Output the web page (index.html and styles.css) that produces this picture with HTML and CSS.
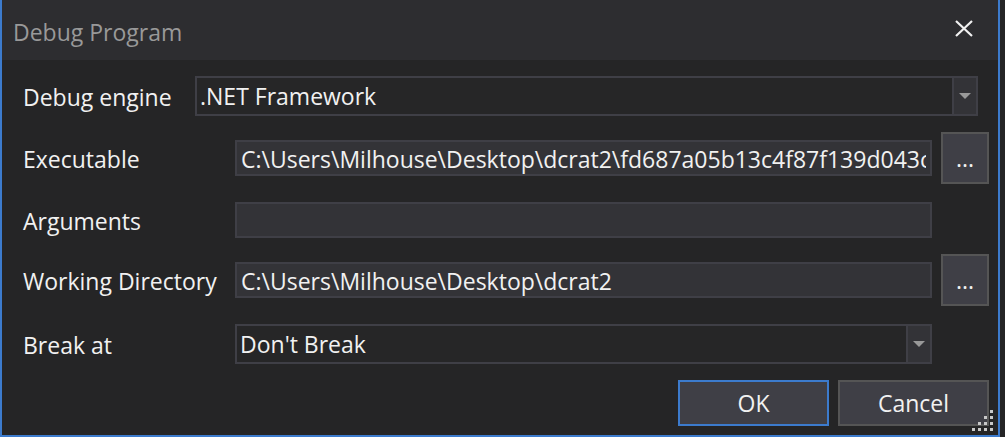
FILE: index.html
```html
<!DOCTYPE html>
<html lang="en">
<head>
    <meta charset="UTF-8">
    <title>Debug Program</title>
    <link rel="stylesheet" href="styles.css">
</head>
<body>
    <div class="dialog">
        <div class="titlebar">
            <span class="title">Debug Program</span>
            <span class="close">
                <svg width="20" height="17" viewBox="0 0 20 17">
                    <path d="M2 1 L18 16 M18 1 L2 16" stroke="#f1f1f1" stroke-width="2.2" fill="none"/>
                </svg>
            </span>
        </div>
        <div class="content">
            <div class="row row-engine">
                <label class="label label-short">Debug engine</label>
                <div class="combo combo-wide">
                    <span class="combo-value">.NET Framework</span>
                    <span class="combo-arrow"><i class="triangle"></i></span>
                </div>
            </div>
            <div class="row row-tall">
                <label class="label">Executable</label>
                <div class="textbox"><span class="textbox-text">C:\Users\Milhouse\Desktop\dcrat2\fd687a05b13c4f87f139d043c4</span></div>
                <button class="browse">...</button>
            </div>
            <div class="row row-args">
                <label class="label">Arguments</label>
                <div class="textbox"></div>
            </div>
            <div class="row row-tall">
                <label class="label">Working Directory</label>
                <div class="textbox"><span class="textbox-text">C:\Users\Milhouse\Desktop\dcrat2</span></div>
                <button class="browse">...</button>
            </div>
            <div class="row row-break">
                <label class="label">Break at</label>
                <div class="combo">
                    <span class="combo-value">Don't Break</span>
                    <span class="combo-arrow"><i class="triangle"></i></span>
                </div>
            </div>
            <div class="actions">
                <button class="action action-default">OK</button>
                <button class="action">Cancel</button>
            </div>
        </div>
        <svg class="grip" width="21" height="21" viewBox="0 0 21 21">
            <rect x="18" y="0" width="3" height="3"/>
            <rect x="12" y="6" width="3" height="3"/>
            <rect x="18" y="6" width="3" height="3"/>
            <rect x="6" y="12" width="3" height="3"/>
            <rect x="12" y="12" width="3" height="3"/>
            <rect x="18" y="12" width="3" height="3"/>
            <rect x="0" y="18" width="3" height="3"/>
            <rect x="6" y="18" width="3" height="3"/>
            <rect x="12" y="18" width="3" height="3"/>
            <rect x="18" y="18" width="3" height="3"/>
        </svg>
    </div>
</body>
</html>
```

FILE: styles.css
```css
body {
    margin: 0;
    background-color: #252526;
    font-family: "Open Sans", "Noto Sans", sans-serif;
    font-size: 23px;
    color: #f1f1f1;
}
.dialog {
    position: relative;
    width: 1000px;
    height: 437px;
    box-sizing: border-box;
    background-color: #252526;
    border-left: 2px solid #3c7bcd;
    border-right: 2px solid #3c7bcd;
    border-bottom: 2px solid #3c7bcd;
}
.titlebar {
    height: 60px;
    background-color: #2d2d30;
    display: flex;
    align-items: center;
    justify-content: space-between;
    padding: 0 24px 0 11px;
}
.title {
    color: #999999;
    font-size: 23px;
    padding-top: 3px;
}
.close {
    display: flex;
    margin-top: -4px;
}
.content {
    padding: 16px 9px 0 21px;
}
.row {
    display: flex;
    align-items: center;
    height: 52px;
    margin-top: 18px;
}
.row-engine {
    height: 40px;
    margin-top: 0;
}
.row-tall {
    margin-top: 16px;
}
.row-args {
    height: 36px;
    margin-top: 18px;
}
.row-break {
    height: 40px;
    margin-top: 18px;
}
.label {
    width: 212px;
    flex-shrink: 0;
    padding-top: 1px;
}
.label-short {
    width: 172px;
}
.textbox {
    width: 697px;
    height: 36px;
    box-sizing: border-box;
    background-color: #333337;
    border: 2px solid #3f3f46;
    padding: 0 4px;
    line-height: 34px;
    white-space: nowrap;
    overflow: hidden;
}
.textbox-text {
    display: block;
    overflow: hidden;
}
.browse {
    width: 48px;
    height: 52px;
    margin-left: 9px;
    background-color: #3f3f46;
    border: 2px solid #555555;
    color: #f1f1f1;
    font-family: inherit;
    font-size: 23px;
    padding: 0 0 1px;
}
.combo {
    display: flex;
    width: 697px;
    height: 40px;
    box-sizing: border-box;
    background-color: #262627;
    border: 2px solid #3f3f46;
}
.combo-wide {
    width: 783px;
}
.combo-value {
    flex: 1;
    padding: 0 3px;
    line-height: 37px;
    white-space: nowrap;
}
.combo-arrow {
    width: 22px;
    background-color: #333337;
    border-left: 2px solid #3f3f46;
    display: flex;
    align-items: center;
    justify-content: center;
}
.triangle {
    width: 0;
    height: 0;
    border-left: 6px solid transparent;
    border-right: 6px solid transparent;
    border-top: 6px solid #999999;
}
.actions {
    display: flex;
    justify-content: flex-end;
    gap: 9px;
    margin-top: 16px;
}
.action {
    width: 151px;
    height: 46px;
    background-color: #3f3f46;
    border: 2px solid #555555;
    color: #f1f1f1;
    font-family: inherit;
    font-size: 23px;
    padding: 0;
}
.action-default {
    border-color: #3c7bcd;
}
.grip {
    position: absolute;
    right: 5px;
    bottom: 4px;
    fill: #c8c8c8;
}
```
